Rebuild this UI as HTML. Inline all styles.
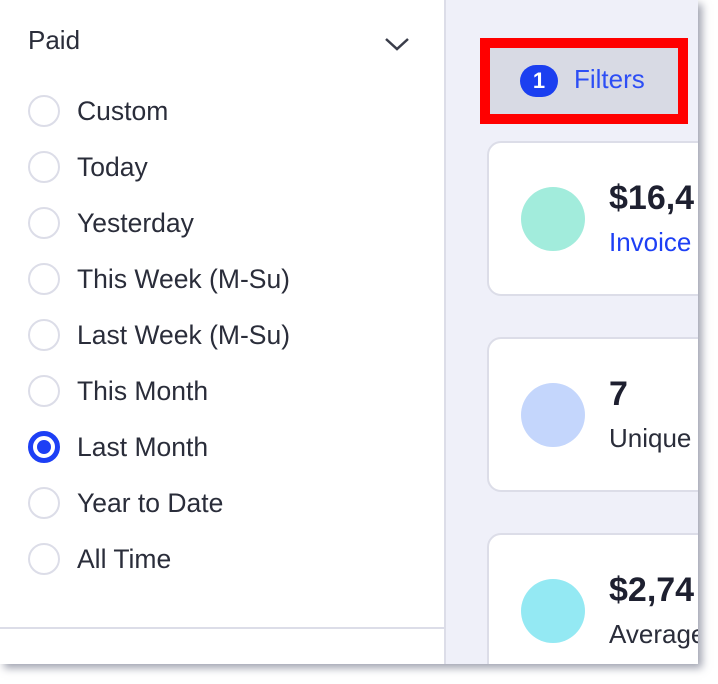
<!DOCTYPE html>
<html><head><style>
html,body{margin:0;padding:0;width:718px;height:684px;background:#fff;overflow:hidden;font-family:"Liberation Sans",sans-serif;}
#wrap{position:absolute;left:0;top:0;width:698px;height:664px;background:#eff0f9;overflow:hidden;box-shadow:4px 4px 8px rgba(80,85,110,.55);}
#side{position:absolute;left:0;top:0;width:444px;height:664px;background:#fff;border-right:2px solid #dcdde8;}
#hr{position:absolute;left:0;top:627px;width:444px;height:2px;background:#dcdde8;}
.t{position:absolute;left:28px;top:25px;font-size:26px;color:#2a2d3a;}
.r{position:absolute;left:28px;width:28px;height:28px;border:2px solid #dcdde8;border-radius:50%;}
.r.on{border:5px solid #1d3ff5;width:22px;height:22px;}
.r.on:after{content:"";position:absolute;left:4px;top:4px;width:14px;height:14px;border-radius:50%;background:#1d3ff5;}
.l{position:absolute;left:77px;font-size:26.5px;color:#2a2d3a;line-height:30px;}
#btn{position:absolute;left:480px;top:38px;width:188px;height:66px;border:10px solid #f00;background:#d8dae4;}
#badge{position:absolute;left:30px;top:17px;width:38px;height:32px;border-radius:16px;background:#1b3ff0;color:#fff;font-size:22px;text-align:center;line-height:32px;font-weight:bold;}
#ft{position:absolute;left:84px;top:16px;font-size:26px;color:#2d4ef5;}
.card{position:absolute;left:487px;width:240px;height:155px;background:#fff;border:2px solid #dcdde8;border-radius:14px;box-sizing:border-box;}
.c{position:absolute;left:32px;top:44px;width:64px;height:64px;border-radius:50%;}
.v{position:absolute;left:120px;top:36px;font-size:34px;color:#1e2030;font-weight:bold;}
.s{position:absolute;left:120px;top:84px;font-size:26px;color:#2a2d3a;}
</style></head><body>
<div id="wrap">
<div id="side">
<div class="t">Paid</div>
<svg style="position:absolute;left:384px;top:36px" width="26" height="16"><path d="M2 3 L13 13 L24 3" fill="none" stroke="#3a3d4a" stroke-width="2.5"/></svg>
<div class="r" style="top:95px"></div><div class="l" style="top:96px">Custom</div>
<div class="r" style="top:151px"></div><div class="l" style="top:152px">Today</div>
<div class="r" style="top:207px"></div><div class="l" style="top:208px">Yesterday</div>
<div class="r" style="top:263px"></div><div class="l" style="top:264px">This Week (M-Su)</div>
<div class="r" style="top:319px"></div><div class="l" style="top:320px">Last Week (M-Su)</div>
<div class="r" style="top:375px"></div><div class="l" style="top:376px">This Month</div>
<div class="r on" style="top:431px"></div><div class="l" style="top:432px">Last Month</div>
<div class="r" style="top:487px"></div><div class="l" style="top:488px">Year to Date</div>
<div class="r" style="top:543px"></div><div class="l" style="top:544px">All Time</div>
<div id="hr"></div>
</div>
<div id="btn"><div id="badge">1</div><div id="ft">Filters</div></div>
<div class="card" style="top:141px"><div class="c" style="background:#a2ecdc"></div><div class="v">$16,4</div><div class="s" style="color:#1d3ff5">Invoice</div></div>
<div class="card" style="top:337px"><div class="c" style="background:#c4d6fc"></div><div class="v">7</div><div class="s">Unique</div></div>
<div class="card" style="top:533px"><div class="c" style="background:#94e9f3"></div><div class="v">$2,74</div><div class="s">Average</div></div>
</div>
</body></html>
